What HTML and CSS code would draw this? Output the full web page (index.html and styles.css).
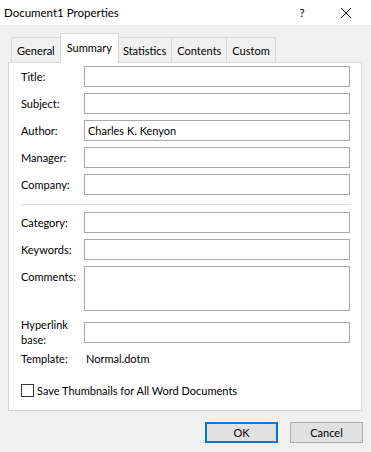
FILE: index.html
```html
<!DOCTYPE html>
<html>
<head>
<meta charset="utf-8">
<link rel="stylesheet" href="styles.css">
</head>
<body>
<div class="window">
  <div class="titlebar">
    <span class="title">Document1 Properties</span>
    <span class="help">?</span>
    <span class="close"><svg width="12" height="12" viewBox="0 0 12 12"><path d="M1 1 L11 11 M11 1 L1 11" stroke="#111" stroke-width="1" fill="none"/></svg></span>
  </div>
  <div class="tabs">
    <div class="tab">General</div>
    <div class="tab active">Summary</div>
    <div class="tab">Statistics</div>
    <div class="tab">Contents</div>
    <div class="tab">Custom</div>
  </div>
  <div class="panel">
    <div class="row"><label class="lbl">Title:</label><div class="field"></div></div>
    <div class="row"><label class="lbl">Subject:</label><div class="field"></div></div>
    <div class="row"><label class="lbl">Author:</label><div class="field">Charles K. Kenyon</div></div>
    <div class="row"><label class="lbl">Manager:</label><div class="field"></div></div>
    <div class="row"><label class="lbl">Company:</label><div class="field"></div></div>
    <div class="sep"></div>
    <div class="row"><label class="lbl">Category:</label><div class="field"></div></div>
    <div class="row"><label class="lbl">Keywords:</label><div class="field"></div></div>
    <div class="row top"><label class="lbl">Comments:</label><div class="field tall"></div></div>
    <div class="row hyper"><label class="lbl">Hyperlink<br>base:</label><div class="field"></div></div>
    <div class="row tmpl"><span class="lbl">Template:</span><span class="val">Normal.dotm</span></div>
    <div class="check"><span class="box"></span><span>Save Thumbnails for All Word Documents</span></div>
  </div>
  <div class="buttons">
    <div class="btn default">OK</div>
    <div class="btn">Cancel</div>
  </div>
</div>
</body>
</html>
```
FILE: styles.css
```css
html, body {
  margin: 0;
  padding: 0;
}
body {
  width: 371px;
  height: 452px;
  background: #f0f0f0;
  font-family: Lato, "Noto Sans", sans-serif;
  font-size: 11px;
  color: #000;
  overflow: hidden;
}
.window {
  display: flex;
  flex-direction: column;
  height: 452px;
}
.titlebar {
  height: 25px;
  background: #fff;
  display: flex;
  align-items: center;
  flex: none;
  font-size: 11.5px;
}
.title {
  padding-left: 4px;
  flex: 1;
  color: #000;
}
.help {
  width: 10px;
  margin-right: 33px;
  text-align: center;
  font-size: 12px;
}
.close {
  width: 12px;
  height: 12px;
  margin-right: 19px;
  display: flex;
}
.tabs {
  display: flex;
  align-items: flex-end;
  margin: 8px 0 0 11px;
  height: 29px;
  flex: none;
}
.tab {
  height: 25px;
  box-sizing: border-box;
  border: 1px solid #d9d9d9;
  border-bottom: none;
  margin-left: -1px;
  padding: 0 5px;
  display: flex;
  align-items: center;
  background: #f0f0f0;
  white-space: nowrap;
}
.tab:first-child {
  margin-left: 0;
}
.tab.active {
  height: 30px;
  margin: 0 -1px -1px -1px;
  padding: 0 6px 3px 6px;
  background: #fff;
  z-index: 2;
}
.panel {
  margin: 0 9px 0 8px;
  height: 349px;
  box-sizing: border-box;
  background: #fff;
  border: 1px solid #d9d9d9;
  padding: 3px 11px 0 12px;
  flex: none;
}
.row {
  display: flex;
  align-items: center;
  margin-bottom: 6px;
}
.lbl {
  width: 63px;
  flex: none;
  line-height: 15px;
}
.field {
  width: 266px;
  height: 21px;
  box-sizing: border-box;
  border: 1px solid #a9a9a9;
  padding: 0 3px;
  display: flex;
  align-items: center;
  white-space: nowrap;
}
.field.tall {
  height: 45px;
}
.row.top {
  align-items: flex-start;
  margin-bottom: 6px;
}
.row.top .lbl {
  padding-top: 3px;
}
.row.hyper {
  margin-bottom: 2px;
}
.sep {
  height: 1px;
  background: #dcdcdc;
  margin: 9px 0 7px 0;
}
.row.tmpl {
  height: 18px;
}
.val {
  padding-left: 2px;
}
.check {
  display: flex;
  align-items: center;
  height: 13px;
  margin-top: 17px;
}
.box {
  width: 13px;
  height: 13px;
  box-sizing: border-box;
  border: 1px solid #333;
  margin-right: 3px;
  background: #fff;
}
.buttons {
  display: flex;
  justify-content: flex-end;
  gap: 12px;
  margin: 11px 8px 0 0;
}
.btn {
  width: 73px;
  height: 21px;
  box-sizing: border-box;
  background: #e1e1e1;
  border: 1px solid #adadad;
  display: flex;
  align-items: center;
  justify-content: center;
}
.btn.default {
  border: 2px solid #0078d7;
}
```
